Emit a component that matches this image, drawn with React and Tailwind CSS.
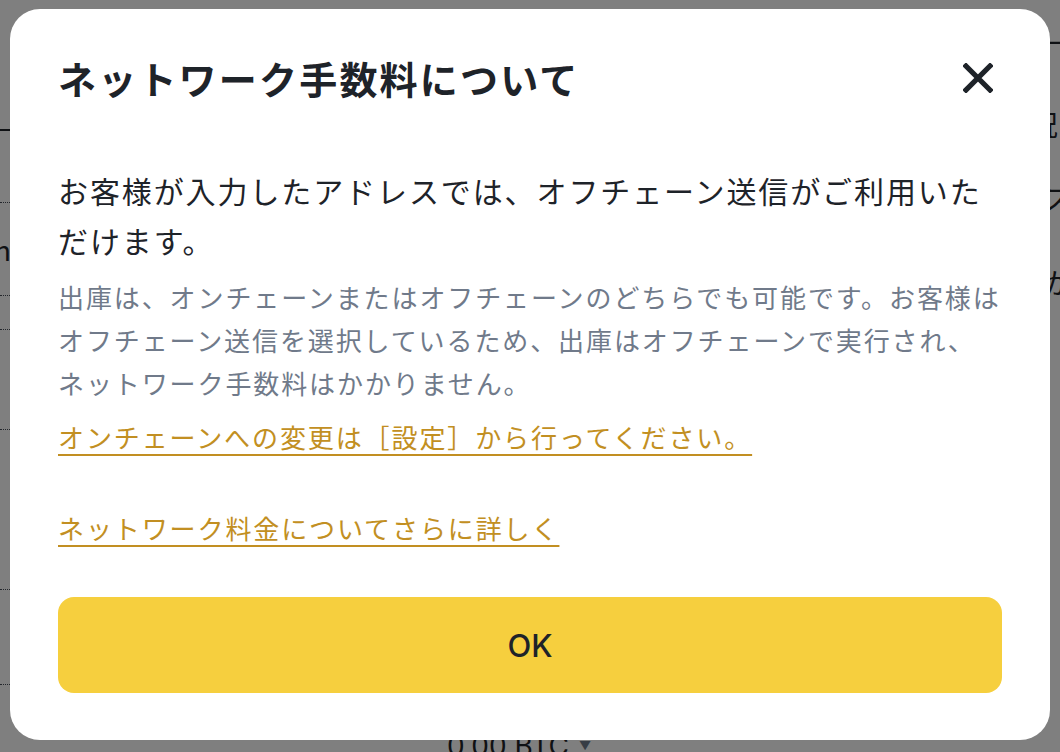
export default function App() {
  const jp = { fontFamily: '"Noto Sans CJK JP", "Noto Sans", sans-serif' };
  return (
    <div className="relative w-[1060px] h-[752px] overflow-hidden bg-white" style={jp}>
      {/* background page (covered by overlay) */}
      <div className="flex h-full">
        <div className="w-[10px] shrink-0 overflow-hidden flex flex-col">
          <div className="h-[129px]" />
          <div className="h-[2px] bg-[#1e2329]" />
          <div className="h-[72px] border-b border-dotted border-[#474d57]" />
          <div className="h-[93px] flex items-center justify-end text-[28px] text-[#1e2329] border-b border-dotted border-[#474d57]">
            <span className="-mr-[1px]">n</span>
          </div>
          <div className="h-[34px] border-b border-dotted border-[#474d57]" />
          <div className="h-[100px] border-b border-dotted border-[#474d57]" />
          <div className="h-[160px] border-b border-dotted border-[#474d57]" />
          <div className="h-[95px] border-b border-dotted border-[#474d57]" />
        </div>
        <div className="flex-1 flex flex-col items-center justify-end">
          <div className="flex items-center gap-[10px] text-[28px] text-[#1e2329] leading-none -mb-[8px] ml-[-20px]" style={{ fontFamily: 'Inter, sans-serif' }}>
            0.00 BTC
            <span className="text-[12px] text-[#707a8a]">▼</span>
          </div>
        </div>
        <div className="w-[12px] shrink-0 overflow-hidden flex flex-col text-[28px] text-[#1e2329] leading-none">
          <div className="h-[28px]" />
          <div className="-ml-[3px] h-[82px]">一</div>
          <div className="-ml-[18px] h-[74px]">況</div>
          <div className="-ml-[4px] h-[84px]">ス</div>
          <div className="-ml-[4px]">か</div>
        </div>
      </div>

      {/* overlay */}
      <div className="absolute inset-0 bg-black/50" />

      {/* modal */}
      <div className="absolute left-[10px] top-[9px] w-[1040px] h-[731px] bg-white rounded-[30px] px-[48px] pt-[45px] pb-[47px] flex flex-col">
        <div className="flex items-center justify-between h-[48px]">
          <h2 className="text-[38px] font-bold tracking-[2.2px] text-[#1e2329] leading-[48px] whitespace-nowrap">
            ネットワーク手数料について
          </h2>
          <button className="w-[40px] h-[40px] flex items-center justify-center mr-[4px]">
            <svg width="30" height="30" viewBox="0 0 30 30">
              <path d="M3 3 L27 27 M27 3 L3 27" stroke="#1e2329" strokeWidth="5.2" strokeLinecap="square" />
            </svg>
          </button>
        </div>

        <div className="mt-[63px] text-[30px] tracking-[1.9px] leading-[50px] text-[#1e2329]">
          <span className="block whitespace-nowrap">お客様が入力したアドレスでは、オフチェーン送信がご利用いた</span>
          <span className="block whitespace-nowrap">だけます。</span>
        </div>

        <div className="mt-[10px] text-[26px] tracking-[1.9px] leading-[43px] text-[#707a8a]">
          <span className="block whitespace-nowrap">出庫は、オンチェーンまたはオフチェーンのどちらでも可能です。お客様は</span>
          <span className="block whitespace-nowrap">オフチェーン送信を選択しているため、出庫はオフチェーンで実行され、</span>
          <span className="block whitespace-nowrap">ネットワーク手数料はかかりません。</span>
        </div>

        <div className="mt-[11px] text-[26px] tracking-[1.9px] leading-[43px] text-[#c28f22]">
          <a className="underline decoration-[2px] underline-offset-[6px] whitespace-nowrap" href="#">
            オンチェーンへの変更は［設定］から行ってください。
          </a>
        </div>

        <div className="mt-[48px] text-[26px] tracking-[1.9px] leading-[43px] text-[#c28f22]">
          <a className="underline decoration-[2px] underline-offset-[6px] whitespace-nowrap" href="#">
            ネットワーク料金についてさらに詳しく
          </a>
        </div>

        <button
          className="mt-auto h-[96px] w-full rounded-[16px] bg-[#f6cf3e] pt-[3px] text-[31px] font-medium text-[#1e2329]"
          style={{ fontFamily: 'Inter, "Noto Sans CJK JP", sans-serif' }}
        >
          OK
        </button>
      </div>
    </div>
  );
}
